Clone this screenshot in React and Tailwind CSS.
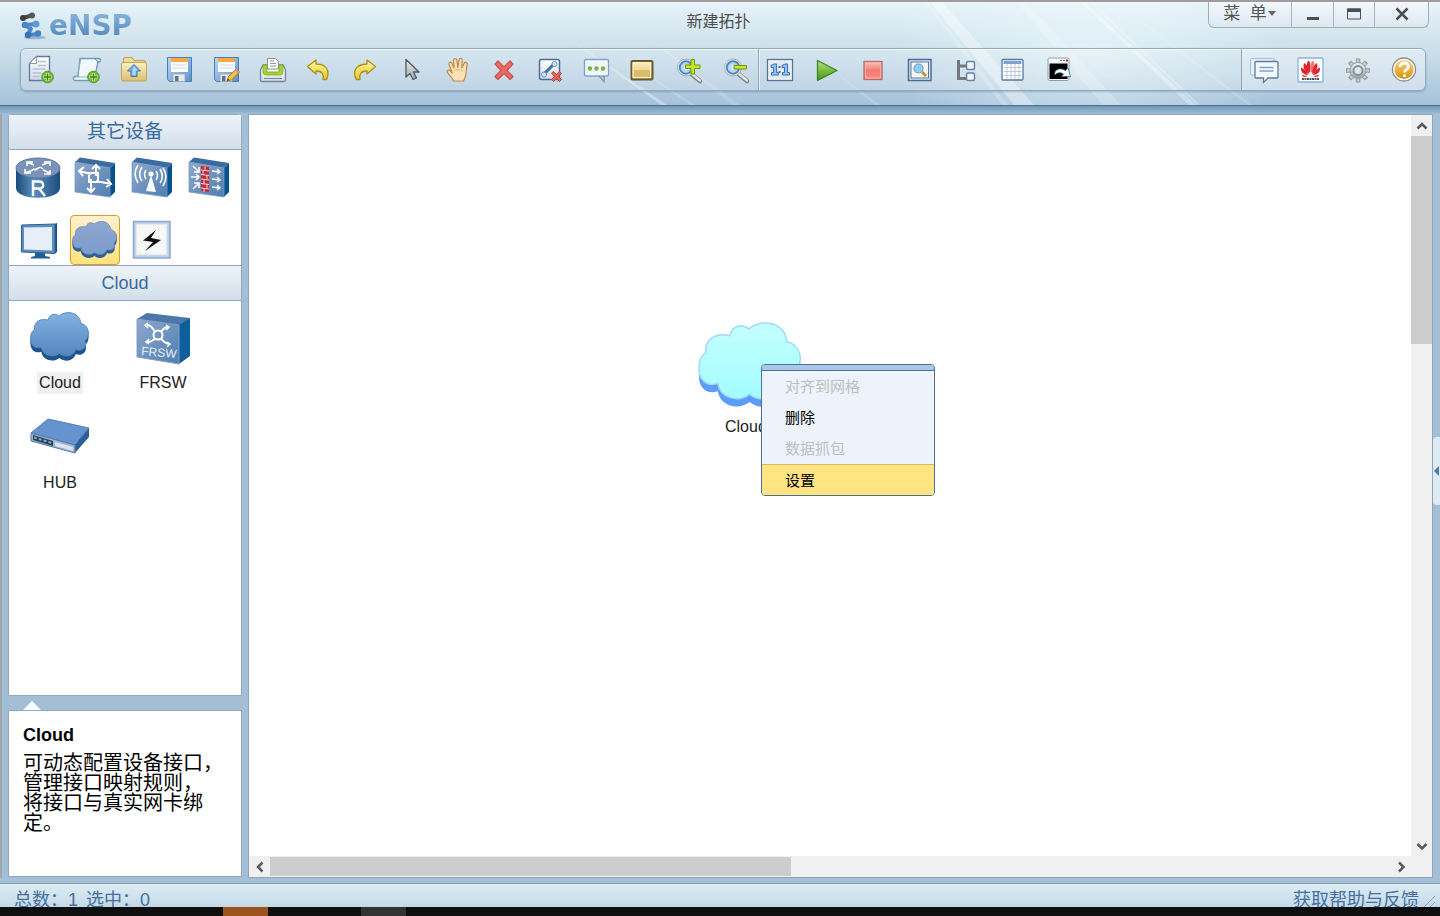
import React from "react";

const CLOUD_PATH =
  "M8 31 C6 18 18 10 32 14 C34 4 44 1 51 7 C62 -3 87 -2 90 20 C104 23 108 41 97 51 C103 62 90 71 81 66 C76 79 62 81 52 73 C41 82 22 77 20 62 C9 66 0 58 1 46 C1 38 4 33 8 31Z";

const CloudShape = ({ id, from, to, side, edge, className }) => (
  <svg viewBox="0 0 106 88" className={className} aria-hidden="true">
    <defs>
      <linearGradient id={id} x1="0" y1="0" x2="0" y2="1">
        <stop offset="0" stopColor={from} />
        <stop offset="1" stopColor={to} />
      </linearGradient>
    </defs>
    <path d={CLOUD_PATH} transform="translate(0 8)" fill={side} />
    <path d={CLOUD_PATH} transform="translate(0 4)" fill={side} />
    <path d={CLOUD_PATH} fill={`url(#${id})`} stroke={edge} strokeWidth="1.5" />
  </svg>
);

const Gradients = () => (
  <svg className="absolute size-0" aria-hidden="true">
    <defs>
      <linearGradient id="paper" x1="0" y1="0" x2="0" y2="1">
        <stop offset="0" stopColor="#ffffff" />
        <stop offset="1" stopColor="#d3dbe8" />
      </linearGradient>
      <linearGradient id="gold" x1="0" y1="0" x2="0" y2="1">
        <stop offset="0" stopColor="#fbf0c4" />
        <stop offset="1" stopColor="#dcbf6a" />
      </linearGradient>
      <linearGradient id="yellow" x1="0" y1="0" x2="0" y2="1">
        <stop offset="0" stopColor="#fff9a0" />
        <stop offset="1" stopColor="#e3c52d" />
      </linearGradient>
      <linearGradient id="blue" x1="0" y1="0" x2="1" y2="1">
        <stop offset="0" stopColor="#bcd8f5" />
        <stop offset="1" stopColor="#5c91cd" />
      </linearGradient>
      <linearGradient id="green" x1="0" y1="0" x2="0" y2="1">
        <stop offset="0" stopColor="#b5e27c" />
        <stop offset="1" stopColor="#3f9612" />
      </linearGradient>
      <linearGradient id="red" x1="0" y1="0" x2="0" y2="1">
        <stop offset="0" stopColor="#fbc6c1" />
        <stop offset="0.5" stopColor="#f47a70" />
        <stop offset="1" stopColor="#fa8c80" />
      </linearGradient>
      <linearGradient id="face" x1="0" y1="0" x2="1" y2="1">
        <stop offset="0" stopColor="#8fa8cd" />
        <stop offset="1" stopColor="#4f7eb0" />
      </linearGradient>
      <linearGradient id="drum" x1="0" y1="0" x2="1" y2="0">
        <stop offset="0" stopColor="#1a4a7c" />
        <stop offset="0.4" stopColor="#5f8fbe" />
        <stop offset="1" stopColor="#1c4d80" />
      </linearGradient>
      <radialGradient id="lens">
        <stop offset="0" stopColor="#e6f3ff" />
        <stop offset="1" stopColor="#9cc4ec" />
      </radialGradient>
      <linearGradient id="orange" x1="0" y1="0" x2="0" y2="1">
        <stop offset="0" stopColor="#f5d27c" />
        <stop offset="1" stopColor="#d9920f" />
      </linearGradient>
      <linearGradient id="grey" x1="0" y1="0" x2="0" y2="1">
        <stop offset="0" stopColor="#eef2f3" />
        <stop offset="1" stopColor="#98a6aa" />
      </linearGradient>
    </defs>
  </svg>
);

const AddBadge = ({ x, y }) => (
  <g>
    <circle cx={x} cy={y} r="5.8" fill="#74bd3a" stroke="#559327" />
    <path d={`M${x - 4} ${y}h8M${x} ${y - 4}v8`} stroke="#c9edA5" strokeWidth="3" />
    <path d={`M${x - 3.5} ${y}h7M${x} ${y - 3.5}v7`} stroke="#3e8018" strokeWidth="1.3" />
  </g>
);

const Floppy = () => (
  <g>
    <path d="M3.500 2.500h24v24h-22l-2-2z" fill="url(#blue)" stroke="#4a7db8" />
    <path d="M7 3h17v4H7z" fill="#f6a947" />
    <path d="M7 7h17v10H7z" fill="#f8fafb" />
    <path d="M9 10h13M9 13h13" stroke="#d5dbe0" />
    <path d="M9 19h12v7.500H9z" fill="#e6eaed" stroke="#9aa8b4" strokeWidth="0.800" />
    <path d="M11 21h3.500v5H11z" fill="#5b7488" />
  </g>
);

const Magnifier = ({ children }) => (
  <g>
    <path d="M16 18.500 25 26" stroke="#7d8184" strokeWidth="4.500" strokeLinecap="round" />
    <path d="M16.500 18.500 25 25.500" stroke="#dfe3e5" strokeWidth="2.500" strokeLinecap="round" />
    <circle cx="11" cy="12.500" r="8.500" fill="#eef3f6" stroke="#a3adb5" />
    <circle cx="11" cy="12.500" r="6.300" fill="url(#lens)" stroke="#4d83be" strokeWidth="1.800" />
    {children}
  </g>
);

const icons = {
  newTopology: (
    <>
      <path d="M11.500 1.500h13v24h-20v-17z" fill="url(#paper)" stroke="#64799a" strokeWidth="1.300" />
      <path d="M11.500 1.500v7h-7z" fill="#fff" stroke="#8b9bb5" />
      <path d="M13 6.500h8M13 10.500h8M7.500 14h13M7.500 18h9M7.500 21.500h7" stroke="#b6c1d2" strokeWidth="1.500" />
      <AddBadge x={22.5} y={22} />
    </>
  ),
  newPaper: (
    <>
      <path d="M9 3.500h19c2 0 2 3.500 0 3.500l-1-.500-4 19H4.500c-3 0-2.500-4 0-4H7z" fill="#f0f8fb" stroke="#6f9cb4" strokeWidth="1.300" />
      <path d="M10.500 3.500C9 5 7 20 6 22h17" fill="none" stroke="#8fb6ca" />
      <path d="M24 4c2 0 2 3 4 3" fill="none" stroke="#5e8ba4" />
      <AddBadge x={22.5} y={22} />
    </>
  ),
  open: (
    <>
      <path d="M5.500 4q0-1.500 1.500-1.500h7l2 3h10q1.500 0 1.500 1.500v3h-22z" fill="#efdc9b" stroke="#bd9d4c" />
      <rect x="3.500" y="7.500" width="25" height="18.500" rx="1.500" fill="url(#gold)" stroke="#c3a556" />
      <path d="m16 9.500 6.500 6.500h-3.500v5.500h-6V16H9.500z" fill="#75b1f2" stroke="#3b73bf" />
      <path d="m16 11.500 3.500 4h-2v4.500h-3V16" fill="#b6d9ff" />
    </>
  ),
  save: <Floppy />,
  saveAs: (
    <>
      <Floppy />
      <path d="m16 26 1.500-4.500 8-7.500 3 3-8 8z" fill="#f8c43c" stroke="#b9761b" />
      <path d="m24 15.500 1.500-1.500 3 3-1.500 1.500z" fill="#e98b80" />
      <path d="m16 26 1-2.500 1.500 1.500z" fill="#4a3a20" />
    </>
  ),
  print: (
    <>
      <path d="M6 10h20l2.500 5v10q0 1.500-1.500 1.500H5q-1.500 0-1.500-1.500V15z" fill="url(#paper)" stroke="#75869a" strokeWidth="1.300" />
      <path d="M6 10h4v7h12v-7h4v7q0 3-3 3H9q-3 0-3-3z" fill="#a6d42c" stroke="#78a517" strokeWidth="0.700" />
      <path d="M10.500 14V3.500h8l3 3V14z" fill="#fbfcfd" stroke="#8d9299" />
      <path d="M13 6h4M13 8.500h6M13 11h6" stroke="#90959c" />
      <path d="M7 23.500h18" stroke="#7a8894" />
    </>
  ),
  undo: (
    <path d="M3.500 11.500 12 5v4c8 0 12 4 12 9.500 0 2-.500 4-1.500 6h-3.500c1-5.500-1-8.500-7-8.500V19z" fill="url(#yellow)" stroke="#ad9015" strokeWidth="1.300" strokeLinejoin="round" />
  ),
  redo: (
    <path d="M25.500 11.500 17 5v4C9 9 4.500 13 4.500 18.500c0 2 .500 4 2 6H10c-1-5.500 1-8.500 7-8.500v3z" fill="url(#yellow)" stroke="#ad9015" strokeWidth="1.300" strokeLinejoin="round" />
  ),
  select: (
    <path d="M9 4.500v17.500l4-3.500 3 6 3.500-1.500-3-6h5.500z" fill="url(#grey)" stroke="#55585c" strokeWidth="1.300" strokeLinejoin="round" />
  ),
  drag: (
    <>
      <path d="M10.500 26c-1-3.500-4-5-6-8.500-1.200-2 1.300-3.300 3-1.500l1.800 2L6 9.500c-.700-2.300 2-3.300 3-1L11 13 10.500 5.500c0-2.300 3-2.500 3.400 0l.900 7 1.200-7.500c.400-2.300 3.200-2 3.200.400L18.800 13l2.300-4.500c1-2 3.600-1 3 1.200C23 15 24 20 20.500 26z" fill="#fbe0b5" stroke="#bb8b4e" strokeWidth="1.200" strokeLinejoin="round" />
      <path d="M10 15h11v6H9.500z" fill="#fbe0b5" />
      <path d="M11 15.500c3-1 6-1 9 0" stroke="#dfb67a" fill="none" />
    </>
  ),
  remove: (
    <path d="m5 9 3-3 6 6 6-6 3 3-6 6.500 6 6-3 3-6-6-6 6-3-3 6-6z" fill="#f0695f" stroke="#c5554e" strokeWidth="1.200" strokeLinejoin="round" />
  ),
  removeLink: (
    <>
      <rect x="3.500" y="4.500" width="20" height="20" rx="2" fill="url(#paper)" stroke="#4f6c90" strokeWidth="1.500" />
      <path d="m8 19 10-10" stroke="#44709f" strokeWidth="3" />
      <circle cx="8" cy="19.500" r="2.500" fill="#cfe4fa" stroke="#5f8fc5" />
      <circle cx="18.500" cy="9" r="2.500" fill="#cfe4fa" stroke="#5f8fc5" />
      <path d="m15.500 18 2-1.500 3 3 3-3 2 2-3 3 3 3-2 2-3-3-3 3-2-2 3-3z" fill="#ef6257" stroke="#b5453e" />
    </>
  ),
  text: (
    <>
      <path d="M4 4.500h21q1.500 0 1.500 1.500v13.500q0 1.500-1.500 1.500h-3v5.500L17 21H4q-1.500 0-1.500-1.500V6Q2.500 4.500 4 4.500z" fill="#f1f6fd" stroke="#7fa2cd" strokeWidth="1.300" />
      <path d="M17 21h5v5.500z" fill="#b5c3d4" stroke="#7d8fa5" />
      <circle cx="8" cy="13.500" r="2.200" fill="#79b23c" />
      <circle cx="14.500" cy="13.500" r="2.200" fill="#79b23c" />
      <circle cx="21" cy="13.500" r="2.200" fill="#79b23c" />
    </>
  ),
  palette: (
    <>
      <rect x="2.500" y="6" width="21" height="18.500" rx="1" fill="url(#gold)" stroke="#6b592c" strokeWidth="2" />
      <path d="M4 7.500h17.500v15H4z" fill="none" stroke="#fbf3d2" />
      <path d="M5 15h16v7H5z" fill="#d9bd6b" />
    </>
  ),
  zoomIn: (
    <Magnifier>
      <path d="M16 4.500h3.500v5.500h5.500v3.500h-5.500V19H16v-5.500h-5.500V10H16z" fill="#c9e81f" stroke="#6d9618" />
    </Magnifier>
  ),
  zoomOut: (
    <Magnifier>
      <path d="M12 10.500h12.500v3.500H12z" fill="#c9e81f" stroke="#6d9618" />
    </Magnifier>
  ),
  actual: (
    <>
      <rect x="2.500" y="4.500" width="25" height="21" fill="#f2f6f9" stroke="#557394" strokeWidth="1.300" />
      <rect x="4.500" y="6.500" width="21" height="17" fill="#e2e9ef" />
      <path d="M6 10.500 9 9h2.500v8.500h2v2.500H6.500v-2.500h2v-5H6zM17 10.500 20 9h2.500v8.500h2v2.500h-7v-2.500h2v-5H17z" fill="#8fc0f2" stroke="#3f73b3" />
      <path d="M13.500 11h2v2h-2zM13.500 16h2v2h-2z" fill="#3f73b3" />
    </>
  ),
  play: (
    <path d="M5.500 5.500 25 15.500l-19.500 10z" fill="url(#green)" stroke="#3c8420" strokeWidth="1.300" strokeLinejoin="round" />
  ),
  stop: (
    <>
      <rect x="6" y="6.500" width="18" height="18" fill="url(#red)" stroke="#b76b6b" strokeWidth="1.300" />
      <path d="M7.500 8h15v15h-15z" fill="none" stroke="#fbb0a9" />
    </>
  ),
  capture: (
    <>
      <rect x="3.500" y="4.500" width="22.500" height="21" fill="#dce6ef" stroke="#486c94" strokeWidth="1.500" />
      <rect x="6" y="7" width="17.500" height="16" fill="#f3f5f7" stroke="#57789c" />
      <path d="m17 17 4 4" stroke="#c89b27" strokeWidth="3" />
      <circle cx="13.500" cy="13.500" r="4.500" fill="#8ed0f5" stroke="#7d9db5" strokeWidth="1.200" />
    </>
  ),
  tree: (
    <>
      <path d="M7.500 5v18.500H15M7.500 11H15" fill="none" stroke="#74787c" strokeWidth="3" />
      <rect x="15.500" y="6.500" width="8" height="8" rx="1.500" fill="#f3f5f8" stroke="#6783a8" strokeWidth="1.500" />
      <rect x="15.500" y="18" width="8" height="7.500" rx="1.500" fill="#f3f5f8" stroke="#6783a8" strokeWidth="1.500" />
    </>
  ),
  table: (
    <>
      <rect x="4" y="4.500" width="21" height="20.500" rx="1" fill="#fff" stroke="#5779a6" strokeWidth="1.300" />
      <path d="M5.500 6h18v3h-18z" fill="#7aa3d6" />
      <path d="M5.500 12.500h18M5.500 16.500h18M5.500 20.500h18M9 9v15M13 9v15M17 9v15M21 9v15" stroke="#bac8da" />
    </>
  ),
  cli: (
    <>
      <rect x="4" y="3" width="21" height="22.500" rx="1.500" fill="#f5f6f7" stroke="#8ba1b9" />
      <path d="M5.500 8.500h18V24h-18z" fill="#000" />
      <path d="M16 5.500h2M19 5.500h2" stroke="#777" />
      <path d="M22 4.500h2v2h-2z" fill="#d22" />
      <path d="M11 20c-1.500-5.500 5-8 10.500-4.500l2.500-2.500 2.500 8.500h-9l2-2.500c-3-2-6.500-1.500-8.500 1z" fill="#fff" stroke="#345f91" strokeWidth="0.800" />
    </>
  ),
  forum: (
    <>
      <path d="M.5 4.500q0-1 1-1h21q1.500 0 1.500 1V20H2q-1.500 0-1.500-1z" fill="#e4f1fa" stroke="#9dbddb" />
      <path d="M6 6.500h21q1 0 1 1v14.500q0 1-1 1h-9l-4.500 4.500V23H6q-1 0-1-1V7.500q0-1 1-1z" fill="#f3f8fc" stroke="#64799b" strokeWidth="1.300" />
      <path d="M9.500 12.500h14M9.500 16h14" stroke="#7ba1d0" strokeWidth="1.300" />
    </>
  ),
  huawei: (
    <>
      <rect x="1" y="3" width="25" height="24" rx="1" fill="#fbfdff" stroke="#8db2dc" strokeWidth="1.300" />
      <g fill="#e0222c">
        <path d="M13 18C9 13 9 7 12 5.500 14 9 13.500 14 13 18z" />
        <path d="M14 18C13 13 13.500 8 15.500 5.500 18.500 8 17.500 13 14 18z" fill="#f0766a" />
        <path d="M12 19C6.500 16 5.500 10.500 7.500 8 11 11 12 15 12 19zM15 19c0-4 1-8 4.500-11 2 2.500 1 8-4.500 11z" />
        <path d="M11 20C5.500 19.500 3.500 16 4 12.500 8 14 10.500 17 11 20zM16 20c.500-3 3-6 7-7.500.500 3.500-1.500 7-7 7.500z" />
        <path d="M11 21c-3 1.500-5 1-6.500-1zM16 21c3 1.500 5 1 6.500-1z" />
      </g>
      <path d="M5 24h17" stroke="#555" strokeWidth="1.800" strokeDasharray="2 .5" />
    </>
  ),
  settings: (
    <>
      <g stroke="#8f9ea1" strokeWidth="4.500">
        <path d="M15 3.500v24M3 15.500h24M6.500 7l17 17M23.500 7l-17 17" />
      </g>
      <g stroke="#c5d0d2" strokeWidth="2.500">
        <path d="M15 4.500v22M4 15.500h22M7.500 8l15 15M22.500 8l-15 15" />
      </g>
      <circle cx="15" cy="15.500" r="8" fill="url(#grey)" stroke="#8f9ea1" />
      <circle cx="15" cy="15.500" r="4.500" fill="#d9e6ee" stroke="#7f8f94" strokeWidth="1.800" />
    </>
  ),
  help: (
    <>
      <circle cx="14" cy="14.500" r="11.500" fill="#fff" stroke="#8d8a84" strokeWidth="1.300" />
      <circle cx="14" cy="14.500" r="9.500" fill="url(#orange)" />
      <path d="M10 12c0-5.500 8.500-5 8.500-.500 0 3-4 3-4 6M14.500 19.500v2.500" fill="none" stroke="#fff" strokeWidth="2.800" />
    </>
  ),
};

const BoxBody = ({ children }) => (
  <>
    <path d="m5 9 5-4.500L45 10l-5 5z" fill="#3a6c9f" />
    <path d="m40 15 5-5v29l-5 5z" fill="#07518c" />
    <path d="m5 9 35 6v29L5 39z" fill="url(#face)" stroke="#7c9cc4" strokeWidth="0.800" />
    {children}
  </>
);

const devices = [
  {
    name: "Router",
    art: (
      <>
        <path d="M3 15v20c0 13 44 13 44 0V15z" fill="url(#drum)" />
        <ellipse cx="25" cy="15" rx="22" ry="10" fill="#7c93b8" stroke="#5c7aa4" />
        <g stroke="#fff" strokeWidth="1.600" fill="none">
          <path d="m21 12-7-3m0 4V9h6M29 12l8-3m-6 0h6v4M20 17l-8 3m0-4v4h6M30 17l7 3m-6 1h6v-4" />
          <path d="M20 16c4 3 6-5 10 0" />
        </g>
        <path d="M20 43V28.500h6c5.500 0 5.500 7 0 7h-6m6 0 6 7.500" fill="none" stroke="#fff" strokeWidth="2.400" />
      </>
    ),
  },
  {
    name: "Switch",
    art: (
      <BoxBody>
        <g stroke="#fff" strokeWidth="2" fill="none">
          <path d="M19 20h9v9h-9zM26 23V12m-4 4 4-4 4 4M21 26v13m-4-4 4 4 4-4M21 21 9 18m5-4-5 4 4 5M26 28l15 3m-4-5 4 5-5 3" />
        </g>
      </BoxBody>
    ),
  },
  {
    name: "WLAN",
    art: (
      <BoxBody>
        <path d="m24 22 5 17-10-1z" fill="#fff" />
        <circle cx="24" cy="21" r="2.500" fill="#fff" />
        <path d="M19 17c-2 3-2 6 0 9M15 14c-3 5-3 10 0 14M11 12c-4 6-3 13 0 18M29 18c2 3 2 6 0 9M33 16c3 5 3 10 0 14M36 15c4 6 3 13 0 18" fill="none" stroke="#fff" strokeWidth="1.600" />
      </BoxBody>
    ),
  },
  {
    name: "Firewall",
    art: (
      <BoxBody>
        <path d="m17 13 8 1v25l-8-1z" fill="#c22c38" />
        <path d="M17 17l8 1M17 21.500l8 1M17 26l8 1M17 30.500l8 1M17 35l8 1M21 13.500v4M19 18v4M23 22v4M20 27v4M23 31v4M20 35v4" stroke="#f2d5da" />
        <path d="m9 13 6 6m-5 0h5v-5M7 24h8m-3-3 3 3-3 3M9 36l6-6m-5 0h5v5M28 18l8 1m-3-3 3 3-3 2M28 26l8 1m-3-3 3 3-3 2M28 34l8 1m-3-3 3 3-3 2" fill="none" stroke="#fff" strokeWidth="1.500" />
      </BoxBody>
    ),
  },
  {
    name: "Terminal",
    art: (
      <>
        <path d="m41 9 3-1v29l-3 2z" fill="#12528a" />
        <path d="M22 37h10v4l5 1v1.500H18V42l4-1z" fill="#1d5f96" />
        <path d="M8.500 10 42 9v29.500L8.500 37z" fill="#5d8cbe" stroke="#2f6295" />
        <path d="M11 12.500 39 12v23.500L11 34.500z" fill="#e6eefa" />
      </>
    ),
  },
  { name: "Cloud", active: true },
  {
    name: "Custom",
    art: (
      <>
        <rect x="6.500" y="6.500" width="36.500" height="36.500" fill="#b9cfeb" stroke="#8fa9cb" strokeWidth="1.500" />
        <rect x="9" y="9" width="31" height="31" fill="#f6f6f6" stroke="#d5dfea" />
        <path d="M29 15 16 25.500l10 1.500-8 9 16-11-10-2z" fill="#111" />
      </>
    ),
  },
];

const mainTools = ["newTopology", "newPaper", "open", "save", "saveAs", "print", "undo", "redo", "select", "drag", "remove", "removeLink", "text", "palette", "zoomIn", "zoomOut"];
const runTools = ["actual", "play", "stop", "capture", "tree", "table", "cli"];
const helpTools = ["forum", "huawei", "settings", "help"];

const ToolGroup = ({ names }) =>
  names.map((name) => (
    <button key={name} type="button" aria-label={name} className="size-[30px] shrink-0">
      <svg viewBox="0 0 30 30" className="size-[30px]" fill="none">
        {icons[name]}
      </svg>
    </button>
  ));

const Logo = () => (
  <div className="flex h-10 items-center pl-[11px]">
    <svg viewBox="0 0 30 30" className="size-[30px]" aria-hidden="true">
      <ellipse cx="16" cy="26.500" rx="11" ry="1.800" fill="#93b6d2" />
      <path d="m4 7 10-3" stroke="#4b4d50" strokeWidth="4" />
      <circle cx="4" cy="7" r="3" fill="#3c3e41" />
      <circle cx="13" cy="4.500" r="3" fill="#55585c" />
      <path d="M18 13 6 14l6 4-4 6 12-1" fill="none" stroke="#4f8ac6" strokeWidth="4" strokeLinejoin="round" />
      <circle cx="6" cy="14" r="3.300" fill="#4a86c4" />
      <circle cx="17" cy="13" r="3.500" fill="#5f9ad4" />
      <circle cx="9" cy="24" r="3.200" fill="#3973b3" />
      <circle cx="19" cy="22.500" r="3.200" fill="#4681c0" />
    </svg>
    <h1 className="bg-linear-to-b from-[#8ab8e2] to-[#4f80b4] bg-clip-text font-['DejaVu_Sans',sans-serif] text-[28px] leading-8 font-bold text-transparent">
      eNSP
    </h1>
  </div>
);

const HeaderGlow = () => (
  <svg viewBox="0 0 1440 105" preserveAspectRatio="none" className="absolute inset-0 size-full" aria-hidden="true">
    <defs>
      <radialGradient id="glow">
        <stop offset="0" stopColor="#effcff" stopOpacity="0.6" />
        <stop offset="1" stopColor="#effcff" stopOpacity="0" />
      </radialGradient>
    </defs>
    <ellipse cx="1090" cy="50" rx="200" ry="110" fill="url(#glow)" />
    <g fill="#fff">
      <path d="M930 0h12l92 105h-20z" opacity="0.350" />
      <path d="M925 0h3l80 105h-6z" opacity="0.200" />
      <path d="M1016 0h10l95 105h-18z" opacity="0.200" />
      <path d="M1080 0h4l112 105h-7z" opacity="0.300" />
      <path d="M1090 0h2l108 105h-3z" opacity="0.250" />
      <path d="M1140 20h2l110 85h-4z" opacity="0.150" />
      <path d="M565 35l102 70h-6z" opacity="0.350" />
      <path d="M640 30l100 75h-8zM590 35l105 70h-5zM820 60l60 45h-5z" opacity="0.150" />
    </g>
  </svg>
);

const WindowButtons = () => (
  <div className="relative flex h-[27px] w-[221px] divide-x divide-[#a9b6bf] rounded-b-md border border-t-0 border-[#a3adb5] bg-linear-to-b from-[#f3f8fb] to-[#dce9f1]">
    <button type="button" className="flex w-[83px] items-center justify-center text-[17px] whitespace-pre text-[#555]">
      菜{"  "}单
      <svg viewBox="0 0 10 6" className="h-[6px] w-[10px]" aria-hidden="true">
        <path d="M1 0h8L5 5z" fill="#666" />
      </svg>
    </button>
    <button type="button" aria-label="Minimize" className="flex w-[42px] items-center justify-center">
      <svg viewBox="0 0 14 14" className="size-[14px]">
        <path d="M1 11.500h12" stroke="#4e4e58" strokeWidth="3" />
      </svg>
    </button>
    <button type="button" aria-label="Maximize" className="flex w-[41px] items-center justify-center">
      <svg viewBox="0 0 14 14" className="size-[14px]">
        <path d="M.5 2h13v10H.5z" fill="none" stroke="#4e4e58" />
        <path d="M0 1.500h14v3.500H0z" fill="#4e4e58" />
      </svg>
    </button>
    <button type="button" aria-label="Close" className="flex flex-1 items-center justify-center">
      <svg viewBox="0 0 14 14" className="size-[14px]">
        <path d="m1.500 1.500 11 11m0-11-11 11" stroke="#4e4e58" strokeWidth="2.500" />
      </svg>
    </button>
  </div>
);

const Header = () => (
  <header className="relative h-[106px] shrink-0 overflow-hidden border-t-2 border-b border-t-[#a09c9e] border-b-[#47718f] bg-linear-to-b from-[#e7f4f9] via-[#c9deea] to-[#a6c2da]">
    <HeaderGlow />
    <div className="relative flex h-[46px] items-start justify-between pr-[11px] pl-2">
      <div className="flex flex-1 pt-1">
        <Logo />
      </div>
      <h2 className="pt-2 text-base leading-6 text-[#4c4c4c]">新建拓扑</h2>
      <div className="-mt-px flex flex-1 justify-end">
        <WindowButtons />
      </div>
    </div>
    <nav className="relative mr-[14px] ml-5 flex h-[43px] rounded-md border border-[#93abbf] bg-white/20 shadow-[inset_0_1px_0_rgba(255,255,255,0.7),0_1px_2px_rgba(80,110,140,0.4)]">
      <div className="flex w-[738px] items-center justify-between border-r border-[#8fa6bb] pr-[6px] pl-1">
        <ToolGroup names={mainTools} />
      </div>
      <div className="flex flex-1 items-center border-l border-white/60 pl-[5px]">
        <div className="flex w-[309px] items-center justify-between">
          <ToolGroup names={runTools} />
        </div>
      </div>
      <div className="flex w-[184px] items-center justify-between rounded-r-md border-l border-[#8fa6bb] bg-white/25 pr-[5px] pl-2">
        <ToolGroup names={helpTools} />
      </div>
    </nav>
  </header>
);

const PanelTitle = ({ children }) => (
  <h3 className="flex h-[35px] shrink-0 items-center justify-center border-b border-[#8fa9c3] bg-linear-to-b from-[#eef3f9] to-[#d3dfeb] text-[#3a6a9c]">
    {children}
  </h3>
);

const Sidebar = () => (
  <aside className="flex w-[234px] shrink-0 flex-col pb-px">
    <section className="flex flex-1 flex-col rounded-t-sm border border-[#8fa9c3] bg-white">
      <PanelTitle>
        <span className="text-[19px]">其它设备</span>
      </PanelTitle>
      <div className="grid h-[116px] shrink-0 grid-cols-4 content-start justify-items-center gap-y-3 border-b border-[#8fa9c3] pt-[3px] pr-1">
        {devices.map((d) => (
          <button
            key={d.name}
            type="button"
            aria-label={d.name}
            className={
              d.active
                ? "flex size-[50px] items-center justify-center rounded-sm border border-[#d89f28] bg-linear-to-b from-[#fdf1cf] to-[#fee27c]"
                : "size-[50px]"
            }
          >
            {d.active ? (
              <CloudShape id="cloudActive" from="#8fa7d0" to="#7b9ccb" side="#2f5f98" edge="#6482b4" className="h-[38px] w-[46px]" />
            ) : (
              <svg viewBox="0 0 50 50" className="size-[50px]">
                {d.art}
              </svg>
            )}
          </button>
        ))}
      </div>
      <PanelTitle>
        <span className="text-lg">Cloud</span>
      </PanelTitle>
      <div className="grid grid-cols-[102px_104px] gap-y-3 pt-[6px] text-base text-[#222]">
        <button type="button" className="flex h-[88px] flex-col items-center">
          <span className="flex h-[60px] items-center">
            <CloudShape id="cloudItem" from="#83b3e2" to="#5585be" side="#1d548f" edge="#4f82b9" className="h-[50px] w-[60px]" />
          </span>
          <span className="mt-[5px] bg-[#f0f0f0] px-[2px] leading-[22px]">Cloud</span>
        </button>
        <button type="button" className="flex h-[88px] flex-col items-center">
          <svg viewBox="0 0 60 60" className="size-[60px]" aria-hidden="true">
            <path d="m4 12 10-6 43 5-10 8z" fill="#4b78a8" />
            <path d="m46 18 11-7v38l-11 8z" fill="#0d5f9c" />
            <path d="m4 12 42 6v39L4 50z" fill="url(#face)" stroke="#83a1ca" />
            <circle cx="25" cy="28" r="4.500" fill="none" stroke="#fff" strokeWidth="2" />
            <path d="M14 18c4 0 6 3 8 7m13-5c-3 0-5 2-7 5m-6 6c-2 3-4 4-8 4m14-4c2 4 4 5 8 6" fill="none" stroke="#fff" strokeWidth="2" />
            <path d="m15 16-3 2 3 3m18-3 3 2-3 3M16 32l-3 3 3 2m18-2 3 2-3 3" fill="none" stroke="#fff" strokeWidth="1.500" />
            <text x="8" y="48" fontSize="12" fill="#e6effa" transform="rotate(5 8 48)">FRSW</text>
          </svg>
          <span className="mt-[5px] leading-[22px]">FRSW</span>
        </button>
        <button type="button" className="flex h-[88px] flex-col items-center">
          <svg viewBox="0 0 60 60" className="size-[60px]" aria-hidden="true">
            <path d="m1 26 17-14 41 9-14 17z" fill="#6493cf" stroke="#5381bb" />
            <path d="m45 38 14-17v9L45 46z" fill="#2d5f97" />
            <path d="m1 26 44 12v8L1 34z" fill="#9db3d1" stroke="#58799f" />
            <path d="m3 28 20 6v5L3 33z" fill="#24425e" />
            <path d="M4 30.500l18 5.500" stroke="#83b0a4" strokeWidth="2" strokeDasharray="3 2" />
            <path d="m25 35 18 5v4l-18-5z" fill="#dbe4f0" />
          </svg>
          <span className="mt-[5px] leading-[22px]">HUB</span>
        </button>
      </div>
    </section>
    <svg viewBox="0 0 18 9" className="mt-[5px] ml-[15px] h-[9px] w-[18px]" aria-hidden="true">
      <path d="M0 9 9 0l9 9z" fill="#fff" />
    </svg>
    <section className="h-[167px] shrink-0 border border-[#8fa9c3] bg-white px-[14px] pt-3 text-black">
      <h4 className="text-lg leading-6 font-bold">Cloud</h4>
      <p className="pt-[6px] text-xl leading-5">
        可动态配置设备接口，
        <br />
        管理接口映射规则，
        <br />
        将接口与真实网卡绑定。
      </p>
    </section>
  </aside>
);

const Arrow = ({ label, d }) => (
  <button type="button" aria-label={label} className="flex size-[21px] shrink-0 items-center justify-center">
    <svg viewBox="0 0 12 12" className="size-3">
      <path d={d} fill="none" stroke="#5a5a5a" strokeWidth="2.500" />
    </svg>
  </button>
);

const menuItems = [
  { text: "对齐到网格", disabled: true },
  { text: "删除" },
  { text: "数据抓包", disabled: true },
  { text: "设置", active: true },
];

const ContextMenu = () => (
  <div className="absolute top-[249px] left-[512px] w-[174px] overflow-hidden rounded-sm border border-[#4f7196] bg-[#edf3fb]">
    <div className="h-[6px] border-b border-[#4f7196] bg-[#a9c7e8]" />
    <ul>
      {menuItems.map((item) => (
        <li key={item.text}>
          <button
            type="button"
            disabled={item.disabled}
            className={
              item.active
                ? "h-[31px] w-full border-t border-[#dfb957] bg-[#fee483] px-[23px] pt-[2px] text-left text-[15px] text-black"
                : "h-[31px] w-full px-[23px] pt-[2px] text-left text-[15px] text-black disabled:text-[#bcbfc3]"
            }
          >
            {item.text}
          </button>
        </li>
      ))}
    </ul>
  </div>
);

const Canvas = () => (
  <main className="flex min-w-0 flex-1 flex-col border border-[#8da5bd] bg-white">
    <div className="flex min-h-0 flex-1">
      <div className="relative flex-1 overflow-hidden">
        <div className="absolute top-[207px] left-[449px]">
          <CloudShape id="cloudNode" from="#c4ffff" to="#a3fdff" side="#5b9cff" edge="#a4d8fb" className="h-[87px] w-[105px]" />
          <p className="pt-2 pl-[27px] text-base leading-5 text-[#222]">Cloud</p>
        </div>
        <ContextMenu />
      </div>
      <div className="flex w-[21px] flex-col bg-[#f0f0f0]">
        <Arrow label="Up" d="M1.500 8.500 6 4l4.500 4.500" />
        <div className="h-[208px] bg-[#cdcdcd]" />
        <div className="flex-1" />
        <Arrow label="Down" d="M1.500 4 6 8.500 10.500 4" />
      </div>
    </div>
    <div className="flex h-[21px] items-center bg-[#f0f0f0] pr-[21px]">
      <Arrow label="Left" d="M8.500 1.500 4 6l4.500 4.500" />
      <div className="h-[19px] w-[521px] bg-[#cdcdcd]" />
      <div className="flex-1" />
      <Arrow label="Right" d="M4 1.500 8.500 6 4 10.500" />
    </div>
  </main>
);

const App = () => {
  return (
    <div className="flex h-screen flex-col overflow-hidden bg-[#a3bed5] font-['Liberation_Sans','Noto_Sans_CJK_SC',sans-serif]">
      <Gradients />
      <Header />
      <div className="h-2 shrink-0 bg-linear-to-b from-[#6e98b8] to-[#a3bed5]" />
      <div className="flex min-h-0 flex-1 border-l-2 border-[#a0a6ab] pl-[6px]">
        <Sidebar />
        <div className="w-[6px] shrink-0" />
        <Canvas />
        <button
          type="button"
          aria-label="Expand"
          className="mt-[323px] flex h-[68px] w-[7px] shrink-0 items-center self-start rounded-l-sm bg-[#dcebf4]"
        >
          <svg viewBox="0 0 7 10" className="h-[10px] w-[7px]">
            <path d="M6 0v10L1 5z" fill="#4e7ba0" />
          </svg>
        </button>
      </div>
      <footer className="mt-[5px] flex h-6 shrink-0 items-start justify-between overflow-hidden border-t border-[#8d9ba8] bg-linear-to-b from-[#deedf6] to-[#c3d9e8] pr-[5px] pl-[14px] text-lg leading-8 text-[#44709c]">
        <p className="flex gap-2">
          <span>总数：1</span>
          <span>选中：0</span>
        </p>
        <div className="flex">
          <a href="#help">获取帮助与反馈</a>
          <svg viewBox="0 0 16 24" className="h-6 w-4" aria-hidden="true">
            <path d="M5 23 16 12M11 23l5-5" stroke="#93a9ba" />
          </svg>
        </div>
      </footer>
      <div className="flex h-[9px] shrink-0 bg-[#0f0f0f]">
        <div className="ml-[223px] w-[45px] bg-[#9c541c]" />
        <div className="ml-[93px] w-[45px] bg-[#333]" />
      </div>
    </div>
  );
};

export default App;
